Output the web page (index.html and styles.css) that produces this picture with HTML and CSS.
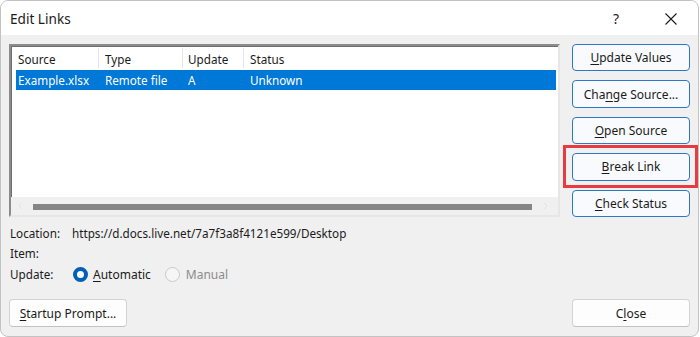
FILE: index.html
```html
<!DOCTYPE html>
<html>
<head>
<meta charset="utf-8">
<link rel="stylesheet" href="styles.css">
</head>
<body>
<div class="window">
  <div class="titlebar">
    <span class="title">Edit Links</span>
    <div class="controls">
      <span class="help">?</span>
      <svg class="close-x" width="12" height="12" viewBox="0 0 12 12"><path d="M0.5 0.5 L11.5 11.5 M11.5 0.5 L0.5 11.5" stroke="#1b1b1b" stroke-width="1.1" fill="none"/></svg>
    </div>
  </div>
  <div class="content">
    <div class="main">
      <div class="list">
        <div class="grid">
          <div class="hdr">
            <span class="c c1">Source</span>
            <span class="c c2">Type</span>
            <span class="c c3">Update</span>
            <span class="c c4">Status</span>
          </div>
          <div class="row sel">
            <span class="c c1">Example.xlsx</span>
            <span class="c c2">Remote file</span>
            <span class="c c3">A</span>
            <span class="c c4">Unknown</span>
          </div>
        </div>
        <div class="hscroll">
          <svg class="arr" width="22" height="18" viewBox="0 0 22 18"><path d="M11 6 L8 9 L11 12" stroke="#e2e2e2" fill="none"/></svg>
          <div class="track"><div class="thumb"></div></div>
          <svg class="arr" width="26" height="18" viewBox="0 0 26 18"><path d="M12 6 L15 9 L12 12" stroke="#e2e2e2" fill="none"/></svg>
        </div>
      </div>
      <div class="buttons">
        <div class="btn blue"><span><u>U</u>pdate Values</span></div>
        <div class="btn blue"><span>Cha<u>n</u>ge Source...</span></div>
        <div class="btn blue"><span><u>O</u>pen Source</span></div>
        <div class="btn blue mark"><span><u>B</u>reak Link</span><div class="highlight"></div></div>
        <div class="btn blue"><span><u>C</u>heck Status</span></div>
      </div>
    </div>
    <div class="info">
      <div class="line"><span class="lbl">Location:</span><span class="val">https://d.docs.live.net/7a7f3a8f4121e599/Desktop</span></div>
      <div class="line"><span class="lbl">Item:</span><span class="val"></span></div>
      <div class="line upd"><span class="lbl">Update:</span>
        <span class="radio on"></span><span class="rtext"><u>A</u>utomatic</span>
        <span class="radio off"></span><span class="rtext dis">Manual</span>
      </div>
    </div>
    <div class="footer">
      <div class="btn plain"><span><u>S</u>tartup Prompt...</span></div>
      <div class="btn plain"><span>C<u>l</u>ose</span></div>
    </div>
  </div>
</div>
</body>
</html>
```

FILE: styles.css
```css
* { box-sizing: border-box; }
html, body { margin: 0; padding: 0; background: #ffffff; }
body {
  font-family: "Noto Sans", "Open Sans", sans-serif;
  font-size: 11.7px;
  color: #1b1b1b;
  width: 700px;
  height: 337px;
  overflow: hidden;
}
u { text-decoration: underline; text-underline-offset: 2px; text-decoration-thickness: 1px; }

.window {
  width: 699px;
  height: 337px;
  border: 1px solid #c3c3c3;
  border-radius: 8px;
  overflow: hidden;
  background: #f0f0f0;
  display: flex;
  flex-direction: column;
}

.titlebar {
  height: 34px;
  background: #ffffff;
  display: flex;
  align-items: center;
  justify-content: space-between;
  padding-left: 9px;
  flex: none;
}
.title { font-size: 13.6px; margin-top: 1px; }
.controls { display: flex; align-items: center; height: 100%; }
.help { font-size: 14px; margin-right: 46px; margin-top: 1px; }
.close-x { margin-right: 21px; margin-top: 1px; }

.content { padding: 9px 8px 0 8px; flex: 1; display: flex; flex-direction: column; }

.main { display: flex; gap: 12px; height: 173px; }

.list {
  width: 551px;
  height: 173px;
  border: 2px solid;
  border-color: #8c8c8c #e6e6e6 #e6e6e6 #8c8c8c;
  box-shadow: inset 1px 1px 0 #6e6e6e;
  background: #ffffff;
  display: flex;
  flex-direction: column;
}
.grid { flex: 1; padding: 0 2px 0 5px; }
.hdr, .row { display: flex; }
.hdr { height: 24px; padding-top: 2px; }
.hdr .c { height: 20px; line-height: 23px; }
.row { height: 20px; }
.row .c { line-height: 21px; }
.c { display: block; white-space: nowrap; border-left: 1px solid transparent; }
.c1 { width: 82px; padding-left: 2px; border-left: 0; }
.c2 { width: 84px; padding-left: 6px; }
.c3 { width: 61px; padding-left: 5px; }
.c4 { flex: 1; padding-left: 6px; }
.hdr .c2, .hdr .c3, .hdr .c4 { border-left-color: #e5e5e5; }
.sel { background: #0078d7; color: #ffffff; }

.hscroll {
  height: 18px;
  background: #f0f0f0;
  display: flex;
  align-items: center;
  flex: none;
}
.arr { flex: none; }
.track { flex: 1; height: 18px; display: flex; align-items: center; }
.thumb { width: 100%; height: 6px; background: #858585; margin-top: 1px; }

.buttons { width: 118px; display: flex; flex-direction: column; gap: 9px; }
.btn {
  height: 28px;
  width: 118px;
  border-radius: 4px;
  display: flex;
  align-items: center;
  justify-content: center;
  font-size: 12px;
  position: relative;
}
.btn span { margin-top: 0; }
.blue { background: #f8fafd; border: 1px solid #2f76c6; }
.plain { background: #fdfdfd; border: 1px solid #d3d3d3; border-bottom-color: #c2c2c2; }

.highlight {
  position: absolute;
  left: -10px;
  right: -9px;
  top: -9px;
  bottom: -8px;
  border: 3px solid #e83a41;
}

.info { margin-top: 6px; }
.line { height: 20px; display: flex; align-items: center; }
.line.upd { height: 22px; }
.lbl { width: 63px; padding-left: 1px; flex: none; }
.radio {
  width: 15px;
  height: 15px;
  border-radius: 50%;
  flex: none;
  margin-right: 5px;
}
.radio.on { background: #ffffff; border: 4px solid #005fb8; margin-left: 1px; }
.radio.off { background: #f6f6f6; border: 1px solid #c9c9c9; margin-left: 14px; margin-right: 6px; }
.rtext { font-size: 12px; }
.rtext.dis { color: #8c8c8c; }

.footer {
  margin-top: 14px;
  display: flex;
  justify-content: space-between;
}
```
